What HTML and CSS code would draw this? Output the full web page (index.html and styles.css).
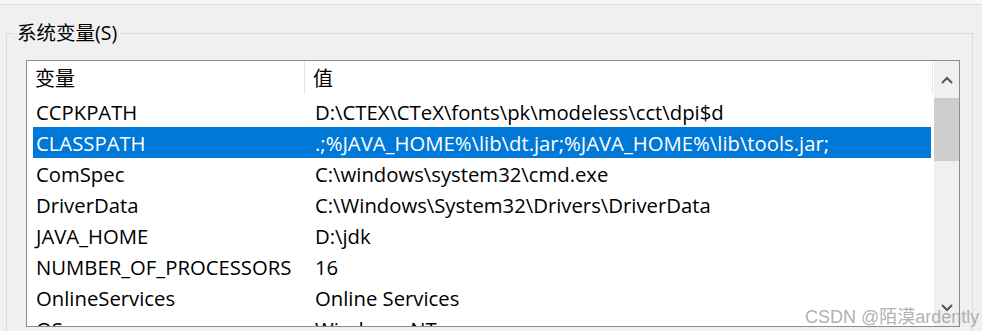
FILE: index.html
```html
<!DOCTYPE html>
<html>
<head>
<meta charset="utf-8">
<link rel="stylesheet" href="styles.css">
</head>
<body>
<div class="topbar"></div>
<fieldset class="group">
  <legend class="legend">系统变量(S)</legend>
  <div class="listbox">
    <div class="list">
      <div class="header">
        <div class="hcell name">变量</div>
        <div class="hcell value">值</div>
      </div>
      <div class="row"><span class="c1">CCPKPATH</span><span class="c2">D:\CTEX\CTeX\fonts\pk\modeless\cct\dpi$d</span></div>
      <div class="row selected"><span class="c1">CLASSPATH</span><span class="c2">.;%JAVA_HOME%\lib\dt.jar;%JAVA_HOME%\lib\tools.jar;</span></div>
      <div class="row"><span class="c1">ComSpec</span><span class="c2">C:\windows\system32\cmd.exe</span></div>
      <div class="row"><span class="c1">DriverData</span><span class="c2">C:\Windows\System32\Drivers\DriverData</span></div>
      <div class="row"><span class="c1">JAVA_HOME</span><span class="c2">D:\jdk</span></div>
      <div class="row"><span class="c1">NUMBER_OF_PROCESSORS</span><span class="c2">16</span></div>
      <div class="row"><span class="c1">OnlineServices</span><span class="c2">Online Services</span></div>
      <div class="row"><span class="c1">OS</span><span class="c2">Windows_NT</span></div>
    </div>
    <div class="scrollbar">
      <div class="sbtn up"><svg width="12" height="8" viewBox="0 0 12 8"><path d="M1 7 L6 2 L11 7" fill="none" stroke="#555" stroke-width="2"/></svg></div>
      <div class="thumb"></div>
      <div class="track"></div>
      <div class="sbtn down"><svg width="12" height="8" viewBox="0 0 12 8"><path d="M1 1 L6 6 L11 1" fill="none" stroke="#555" stroke-width="2"/></svg></div>
    </div>
  </div>
</fieldset>
<div class="watermark">CSDN @陌漠ardently</div>
</body>
</html>
```
FILE: styles.css
```css
html, body {
  margin: 0;
  padding: 0;
}
body {
  width: 982px;
  height: 331px;
  overflow: hidden;
  background: #f0f0f0;
  font-family: "Open Sans", "Noto Sans CJK SC", sans-serif;
  color: #000;
  position: relative;
}
.topbar {
  height: 4px;
  background: #f7f7f7;
  border-bottom: 1px solid #dddddd;
}
.group {
  margin: 16px 9px 0 6px;
  padding: 0;
  border: 1px solid #dcdcdc;
  border-bottom: none;
  height: 400px;
}
.legend {
  margin-left: 7px;
  padding: 0 3px;
  font-size: 19.5px;
  line-height: 24px;
  color: #000;
}
.listbox {
  margin: 15px 0 0 19px;
  width: 932px;
  height: 265px;
  border: 1px solid #8c8c8c;
  background: #fff;
  display: flex;
  overflow: hidden;
}
.list {
  flex: 1;
  overflow: hidden;
}
.header {
  display: flex;
  height: 35px;
  align-items: stretch;
}
.hcell {
  display: flex;
  align-items: center;
  font-size: 20px;
}
.hcell.name {
  width: 269px;
  padding-left: 8px;
  border-right: 1px solid #e5e5e5;
  margin: 0 0 2px 0;
}
.hcell.value {
  flex: 1;
  padding-left: 8px;
  border-right: 1px solid #e5e5e5;
  margin-right: 1px;
  margin-bottom: 2px;
}
.row {
  display: flex;
  align-items: center;
  height: 31px;
  margin-left: 6px;
  margin-right: 3px;
  font-size: 20.3px;
  white-space: nowrap;
}
.row.selected {
  background: #0078d7;
  color: #fff;
}
.c1 {
  width: 279px;
  padding-left: 3px;
}
.c2 {
  flex: 1;
}
.scrollbar {
  width: 25px;
  background: #f0f0f0;
  display: flex;
  flex-direction: column;
}
.sbtn {
  display: flex;
  align-items: center;
  justify-content: center;
}
.sbtn.up {
  height: 37px;
}
.thumb {
  height: 63px;
  background: #cdcdcd;
}
.track {
  flex: 1;
}
.sbtn.down {
  height: 37px;
}
.watermark {
  position: absolute;
  left: 805px;
  top: 302px;
  font-family: "Liberation Sans", "Noto Sans CJK SC", sans-serif;
  font-size: 18px;
  color: rgba(150, 150, 150, 0.75);
  white-space: nowrap;
}
```
